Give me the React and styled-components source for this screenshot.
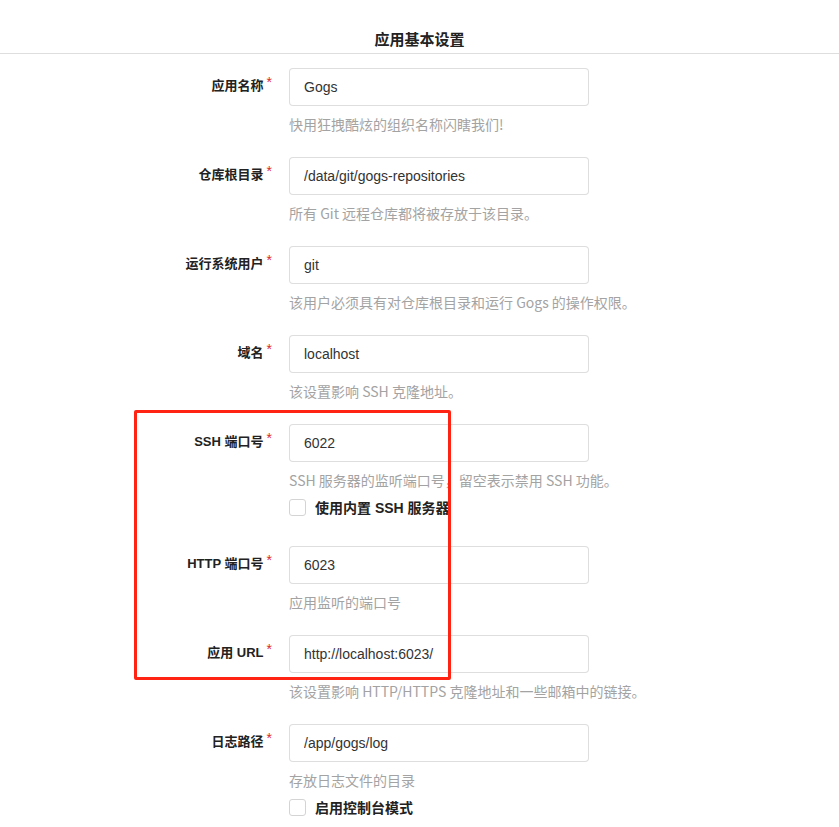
import React from "react";
import styled, { createGlobalStyle } from "styled-components";

const Global = createGlobalStyle`
  html, body { margin: 0; padding: 0; background: #fff; }
  body {
    font-family: "Liberation Sans", "Noto Sans CJK SC", Arial, sans-serif;
    font-size: 14px;
    color: #333;
  }
  * { box-sizing: border-box; }
`;

const Page = styled.div`
  position: relative;
  width: 839px;
  min-height: 827px;
  overflow: hidden;
`;

const Header = styled.h4`
  margin: 0;
  padding: 30px 0 3px;
  line-height: 20px;
  font-size: 15px;
  font-weight: 700;
  text-align: center;
  color: #222;
  border-bottom: 1px solid #dedede;
`;

const Form = styled.div`
  padding-top: 14px;
  display: flex;
  flex-direction: column;
`;

const Field = styled.div`
  display: flex;
  align-items: flex-start;
  margin-bottom: ${(p) => (p.$extra ? 29 : 23)}px;
`;

const Label = styled.label`
  width: 273px;
  flex: none;
  display: block;
  text-align: right;
  padding-top: 8px;
  line-height: 20px;
  padding-right: 1px;
  font-size: 13px;
  font-weight: 700;
  color: #222;
  white-space: nowrap;
  &::after {
    content: "*";
    display: inline-block;
    vertical-align: top;
    color: #db2828;
    font-weight: 400;
    font-size: 14px;
    line-height: 14px;
    margin: -1px 0 0 3px;
  }
`;

const Control = styled.div`
  margin-left: 16px;
  display: flex;
  flex-direction: column;
`;

const Input = styled.input`
  width: 300px;
  height: 38px;
  padding: 0 14px;
  border: 1px solid rgba(34, 36, 38, 0.15);
  border-radius: 4px;
  font-family: "Liberation Sans", "Noto Sans CJK SC", Arial, sans-serif;
  font-size: 14px;
  color: #333;
  outline: none;
`;

const Help = styled.span`
  padding-top: 8px;
  line-height: 20px;
  font-size: 14px;
  color: #a3a3a3;
  white-space: nowrap;
  font-family: "Noto Sans CJK SC", "Liberation Sans", sans-serif;
`;

const CheckRow = styled.label`
  margin-top: 7px;
  height: 20px;
  display: flex;
  align-items: center;
  gap: 9px;
  font-size: 14px;
  font-weight: 700;
  color: #222;
  white-space: nowrap;
`;

const Box = styled.span`
  width: 17px;
  height: 17px;
  border: 1px solid #d4d4d5;
  border-radius: 3px;
  background: #fff;
  flex: none;
`;

const Highlight = styled.div`
  position: absolute;
  left: 134px;
  top: 410px;
  width: 317px;
  height: 270px;
  border: 3px solid #ff2314;
  border-radius: 2px;
  pointer-events: none;
`;

const fields = [
  { label: "应用名称", value: "Gogs", help: "快用狂拽酷炫的组织名称闪瞎我们!" },
  { label: "仓库根目录", value: "/data/git/gogs-repositories", help: "所有 Git 远程仓库都将被存放于该目录。" },
  { label: "运行系统用户", value: "git", help: "该用户必须具有对仓库根目录和运行 Gogs 的操作权限。" },
  { label: "域名", value: "localhost", help: "该设置影响 SSH 克隆地址。" },
  { label: "SSH 端口号", value: "6022", help: "SSH 服务器的监听端口号，留空表示禁用 SSH 功能。", check: "使用内置 SSH 服务器", extra: true },
  { label: "HTTP 端口号", value: "6023", help: "应用监听的端口号" },
  { label: "应用 URL", value: "http://localhost:6023/", help: "该设置影响 HTTP/HTTPS 克隆地址和一些邮箱中的链接。" },
  { label: "日志路径", value: "/app/gogs/log", help: "存放日志文件的目录", check: "启用控制台模式" },
];

export default function App() {
  return (
    <Page>
      <Global />
      <Header>应用基本设置</Header>
      <Form>
        {fields.map((f) => (
          <Field key={f.label} $extra={f.extra}>
            <Label>{f.label}</Label>
            <Control>
              <Input defaultValue={f.value} />
              <Help>{f.help}</Help>
              {f.check && (
                <CheckRow>
                  <Box />
                  {f.check}
                </CheckRow>
              )}
            </Control>
          </Field>
        ))}
      </Form>
      <Highlight />
    </Page>
  );
}
